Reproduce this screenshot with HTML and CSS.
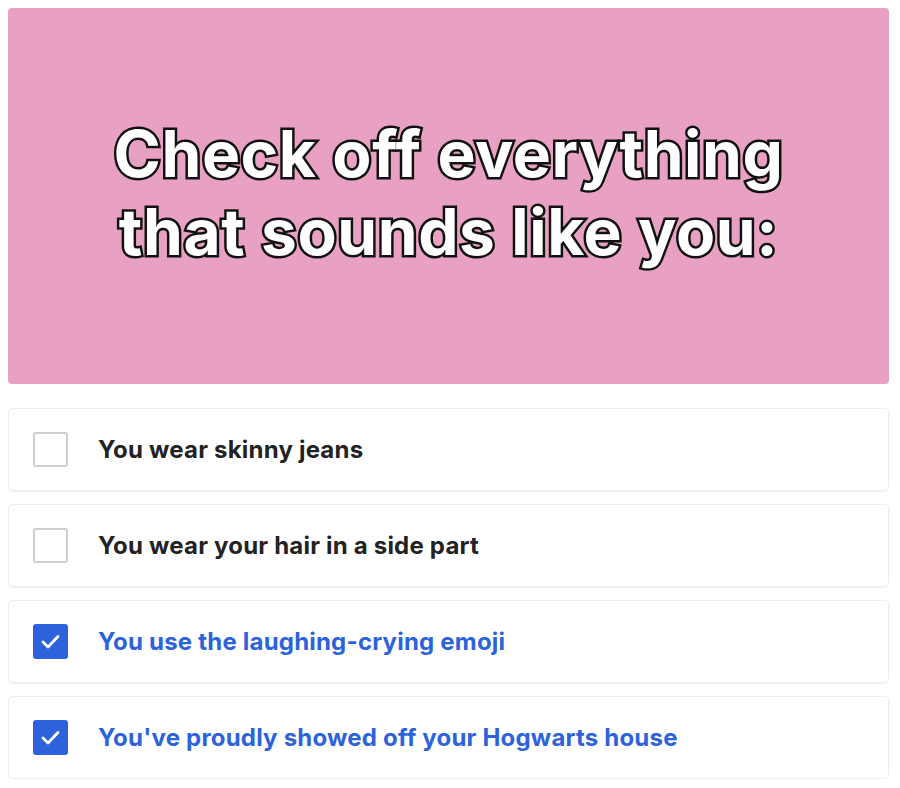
FILE: index.html
```html
<!DOCTYPE html>
<html>
<head>
<meta charset="utf-8">
<link rel="stylesheet" href="styles.css">
</head>
<body>
<div class="page">
  <div class="hero">
    <h1 class="hero-title">Check off everything<br>that sounds like you:</h1>
  </div>
  <ul class="options">
    <li class="option">
      <span class="box"></span>
      <span class="label">You wear skinny jeans</span>
    </li>
    <li class="option">
      <span class="box"></span>
      <span class="label">You wear your hair in a side part</span>
    </li>
    <li class="option checked">
      <span class="box"><svg class="tick" viewBox="0 0 31 31"><path d="M8 16 L13 21 L23 10.5" fill="none" stroke="#fff" stroke-width="2.8" stroke-linecap="round" stroke-linejoin="round"/></svg></span>
      <span class="label">You use the laughing-crying emoji</span>
    </li>
    <li class="option checked">
      <span class="box"><svg class="tick" viewBox="0 0 31 31"><path d="M8 16 L13 21 L23 10.5" fill="none" stroke="#fff" stroke-width="2.8" stroke-linecap="round" stroke-linejoin="round"/></svg></span>
      <span class="label">You've proudly showed off your Hogwarts house</span>
    </li>
  </ul>
</div>
</body>
</html>
```
FILE: styles.css
```css
* { box-sizing: border-box; }
html, body { margin: 0; padding: 0; background: #fff; }
body { font-family: "Inter", "Liberation Sans", sans-serif; }
.page {
  padding: 8px 11px 0 8px;
}
.hero {
  background: #e8a1c2;
  border-radius: 4px;
  height: 376px;
  display: flex;
  align-items: center;
  justify-content: center;
}
.hero-title {
  margin: 0;
  padding-bottom: 6px;
  color: #fff;
  font-family: "Inter", sans-serif;
  font-weight: 700;
  font-size: 64px;
  line-height: 78px;
  letter-spacing: 0.6px;
  text-align: center;
  -webkit-text-stroke: 5px #111;
  paint-order: stroke fill;
}
.options {
  list-style: none;
  margin: 24px 0 0 0;
  padding: 0;
  display: flex;
  flex-direction: column;
  gap: 13px;
}
.option {
  height: 83px;
  border: 1px solid #ececec;
  border-radius: 4px;
  box-shadow: 0 1px 2px rgba(0,0,0,0.06);
  display: flex;
  align-items: center;
  padding-left: 24px;
}
.box {
  width: 35px;
  height: 35px;
  border: 2px solid #cfcfcf;
  border-radius: 3px;
  flex: none;
  display: flex;
  align-items: center;
  justify-content: center;
}
.tick { width: 31px; height: 31px; display: block; }
.checked .box {
  background: #2c63dc;
  border-color: #2c63dc;
}
.label {
  margin-left: 30px;
  font-weight: 700;
  font-size: 24px;
  color: #222;
  letter-spacing: 0.2px;
}
.checked .label { color: #2c63dc; }
```
